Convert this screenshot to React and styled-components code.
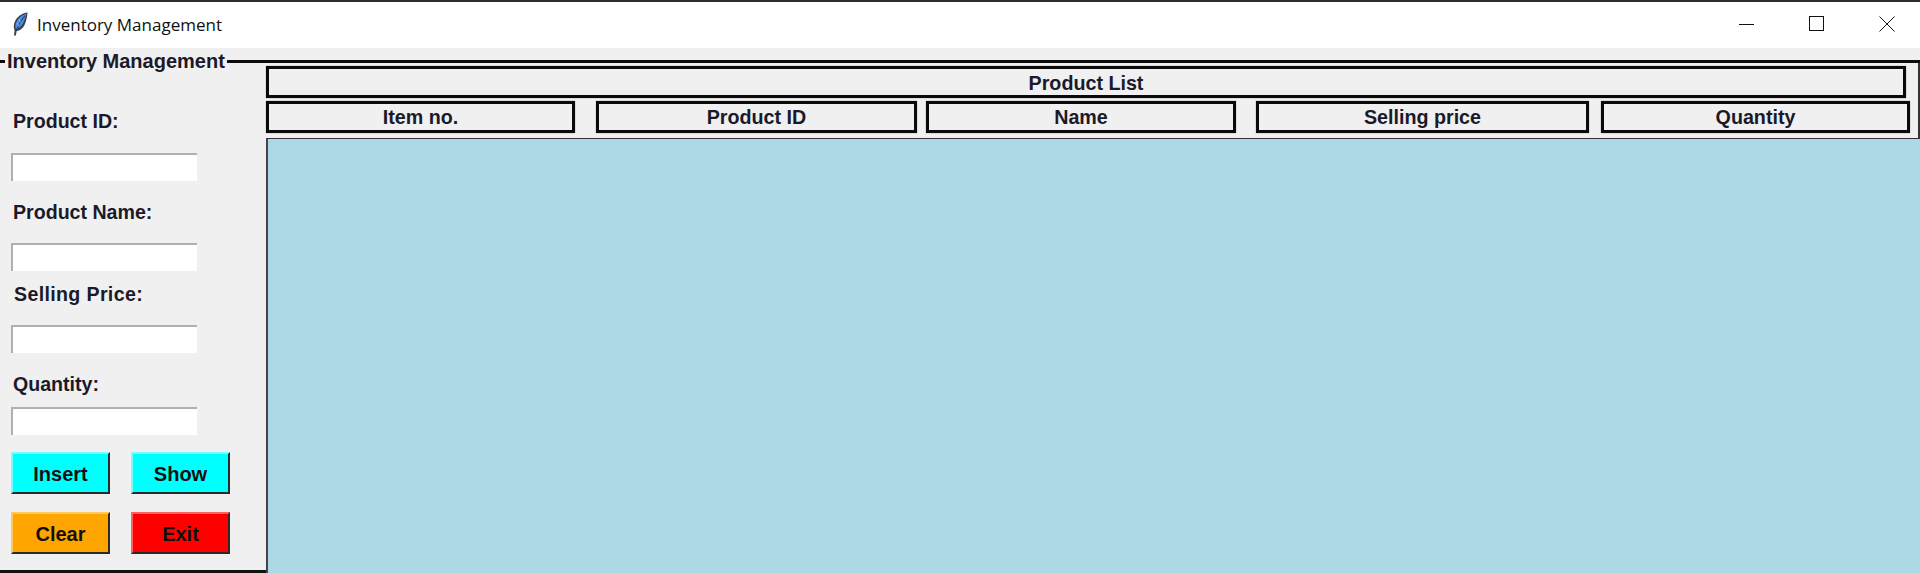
import styled, { createGlobalStyle } from "styled-components";

const Global = createGlobalStyle`
  html, body { margin: 0; padding: 0; height: 100%; overflow: hidden; }
  #root { height: 100%; }
`;

const Window = styled.div`
  width: 1920px;
  height: 573px;
  display: flex;
  flex-direction: column;
  background: #f0f0f0;
  overflow: hidden;
`;

const TitleBar = styled.div`
  height: 46px;
  flex: none;
  border-top: 2px solid #2e2e2e;
  background: #fff;
  display: flex;
  align-items: center;
  padding: 0 25px 0 13px;
`;

const AppTitle = styled.span`
  margin-left: 9px;
  margin-top: -2px;
  font: 400 17px "Open Sans", sans-serif;
  color: #111;
`;

const FeatherIcon = styled.svg`
  margin-top: -3px;
  flex: none;
`;

const Controls = styled.div`
  margin-left: auto;
  display: flex;
  gap: 54px;
  margin-top: -2px;
`;

const Frame = styled.div`
  position: relative;
  flex: 1;
  margin-top: 12px;
  display: flex;
  min-height: 0;
  border-top: 3px solid #0c0c0c;
`;

const Legend = styled.span`
  position: absolute;
  left: 5px;
  top: -14px;
  padding: 0 2px;
  background: #f0f0f0;
  font: 700 20px/24px "Liberation Sans", sans-serif;
  color: #1a1a2a;
`;

const Side = styled.div`
  width: 266px;
  flex: none;
  box-sizing: border-box;
  padding-left: 11px;
  border-bottom: 3px solid #111;
`;

const Label = styled.div`
  height: 22px;
  margin: ${(p) => p.$top}px 0 ${(p) => p.$bottom}px ${(p) => p.$left || 2}px;
  font: 700 19.6px/22px "Liberation Sans", sans-serif;
  letter-spacing: ${(p) => p.$spacing || 0}px;
  color: #1a1a2a;
`;

const Input = styled.input`
  display: block;
  width: 186px;
  height: 28px;
  box-sizing: border-box;
  padding: 0;
  background: #fff;
  border: 0;
  border-top: 2px solid #b0b0b0;
  border-left: 2px solid #b0b0b0;
  outline: 0;
`;

const Buttons = styled.div`
  margin-top: 17px;
  display: grid;
  grid-template-columns: 99px 99px;
  grid-auto-rows: 42px;
  gap: 18px 21px;
`;

const Btn = styled.button`
  padding: 2px 0 0;
  box-sizing: border-box;
  border: 2px solid;
  border-color: ${(p) => p.$light} #2a2a2a #2a2a2a ${(p) => p.$light};
  background: ${(p) => p.$bg};
  font: 700 20px "Liberation Sans", sans-serif;
  color: #101010;
`;

const Main = styled.div`
  flex: 1;
  min-width: 0;
  display: flex;
  flex-direction: column;
`;

const ListHead = styled.div`
  height: 75px;
  flex: none;
  box-sizing: border-box;
  padding-top: 3px;
  border-right: 2px solid #333;
`;

const HeadBox = styled.div`
  box-sizing: border-box;
  height: 32px;
  width: ${(p) => p.$w}px;
  margin-left: ${(p) => p.$ml || 0}px;
  padding-top: ${(p) => p.$pad || 1}px;
  flex: none;
  border: 3px solid #0a0a0a;
  box-shadow: 0 0 1px #777;
  display: flex;
  align-items: center;
  justify-content: center;
  font: 700 19.7px "Liberation Sans", sans-serif;
  color: #1a1a2a;
`;

const Columns = styled.div`
  display: flex;
  margin-top: 3px;
`;

const Canvas = styled.div`
  flex: 1;
  background: #add8e6;
  border-top: 1px solid #333;
  border-left: 2px solid #444;
`;

const columns = [
  { name: "Item no.", w: 309 },
  { name: "Product ID", w: 321, ml: 21 },
  { name: "Name", w: 310, ml: 9 },
  { name: "Selling price", w: 333, ml: 20 },
  { name: "Quantity", w: 309, ml: 12 },
];

function Feather() {
  return (
    <FeatherIcon width="15" height="24" viewBox="0 0 15 24">
      <path d="M14.500 0.500C9 1 3 5 1.200 11.500c-.7 2.800-.5 5 .4 6.800L1 23.500h1.800l.9-4.500c4-.3 7-3.400 8.600-8 1.100-3.200 2.100-6.800 2.200-10.500z" fill="#39414d" />
      <path d="M13.500 1.800C9.200 2.800 4.300 6.500 2.700 12c-.5 1.900-.4 3.600 0 5 3.900-.7 6.700-3.700 8.200-7.800.9-2.400 2-4.900 2.600-7.400z" fill="#4d8fe6" />
      <path d="M12 3.500C8.500 7.500 5.500 12.500 3.300 18.500" stroke="#1d3f78" strokeWidth="1.100" fill="none" />
      <path d="M6 7.500l1.500 3M4.500 10.500l1 3.500" stroke="#9cc4f2" strokeWidth="0.800" fill="none" />
    </FeatherIcon>
  );
}

function WinIcon({ children }) {
  return (
    <svg width="16" height="16" viewBox="0 0 16 16" fill="none" stroke="#111" strokeWidth="1">
      {children}
    </svg>
  );
}

export default function App() {
  return (
    <Window>
      <Global />
      <TitleBar>
        <Feather />
        <AppTitle>Inventory Management</AppTitle>
        <Controls>
          <WinIcon><path d="M0 8.500h15" /></WinIcon>
          <WinIcon><rect x="0.500" y="0.500" width="14" height="14" /></WinIcon>
          <WinIcon><path d="M0.500 0.500l15 15M15.500 0.500l-15 15" /></WinIcon>
        </Controls>
      </TitleBar>
      <Frame>
        <Legend>Inventory Management</Legend>
        <Side>
          <Label $top={47} $bottom={21}>Product ID:</Label>
          <Input />
          <Label $top={20} $bottom={20}>Product Name:</Label>
          <Input />
          <Label $top={12} $bottom={20} $left={3} $spacing={0.35}>Selling Price:</Label>
          <Input />
          <Label $top={20} $bottom={12}>Quantity:</Label>
          <Input />
          <Buttons>
            <Btn $bg="#00ffff" $light="#70ffff">Insert</Btn>
            <Btn $bg="#00ffff" $light="#70ffff">Show</Btn>
            <Btn $bg="#ffa500" $light="#ffc860">Clear</Btn>
            <Btn $bg="#ff0000" $light="#ff6060">Exit</Btn>
          </Buttons>
        </Side>
        <Main>
          <ListHead>
            <HeadBox $w={1640} $pad={2}>Product List</HeadBox>
            <Columns>
              {columns.map((c) => (
                <HeadBox key={c.name} $w={c.w} $ml={c.ml}>{c.name}</HeadBox>
              ))}
            </Columns>
          </ListHead>
          <Canvas />
        </Main>
      </Frame>
    </Window>
  );
}
